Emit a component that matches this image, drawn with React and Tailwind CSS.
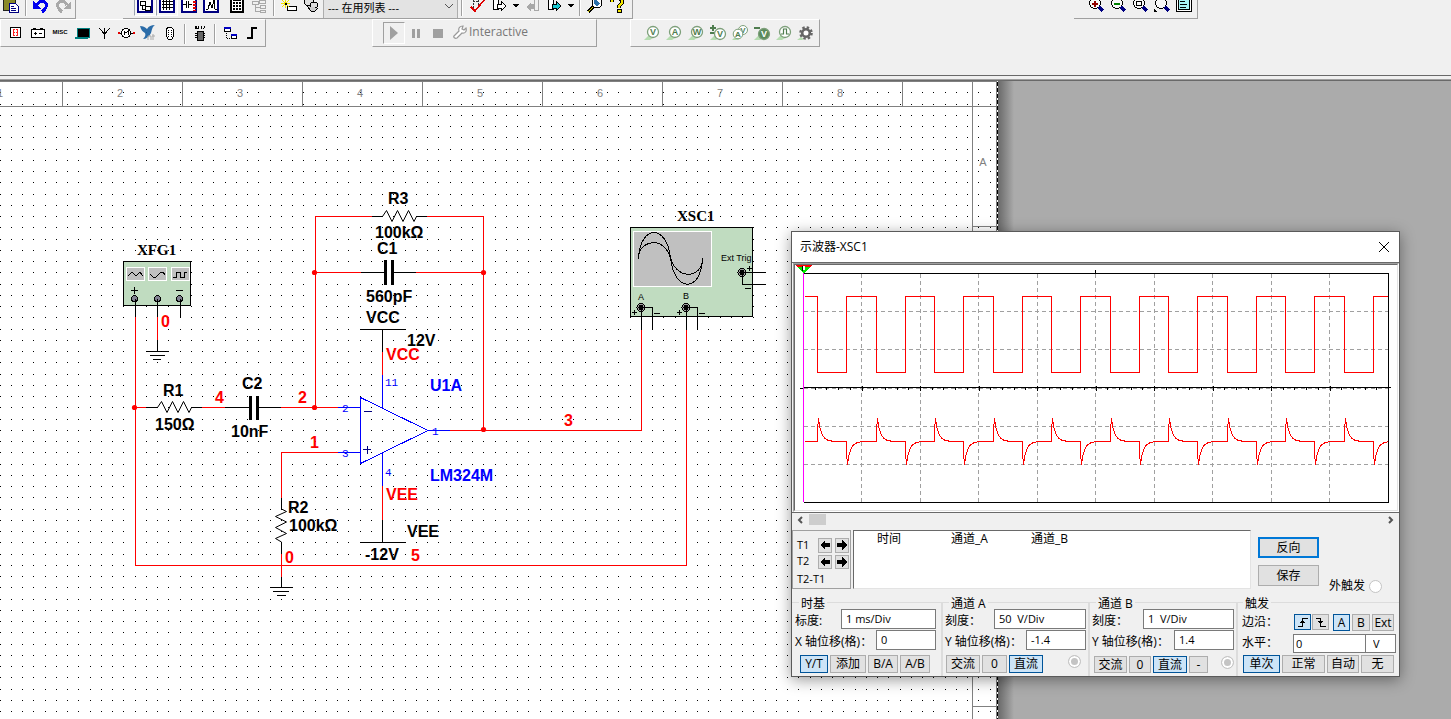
import React, { useState } from 'react';

const BOLD = { fontFamily: '"Liberation Sans", Arial, sans-serif', fontWeight: 700 };
const MONO = { fontFamily: '"Liberation Mono", monospace' };
const SERIF = { fontFamily: '"Liberation Serif", serif', fontWeight: 700 };
const SANS = { fontFamily: '"Liberation Sans", Arial, sans-serif' };

/* ---------- toolbar pieces ---------- */

const Icon = ({ children, smooth }) => (
  <svg viewBox="0 0 20 16" className="w-5 h-4 shrink-0" fill="none" shapeRendering={smooth ? 'auto' : 'crispEdges'}>
    {children}
  </svg>
);

const Tool = ({ label, pressed, smooth, children }) => (
  <button
    aria-label={label}
    className={`w-[22px] shrink-0 flex justify-center items-end ${pressed ? 'h-[22px] pb-[2px] -mb-[3px] border border-t-gray-400 border-l-gray-400 border-r-white border-b-white bg-[#f6f6f6]' : 'h-4'}`}
  >
    <Icon smooth={smooth}>{children}</Icon>
  </button>
);

const Sep = () => (
  <div className="w-2 h-5 shrink-0 flex justify-center -mb-[3px]">
    <div className="w-[2px] h-full bg-[#a0a0a0] border-r border-white"></div>
  </div>
);

const Drop = ({ label }) => (
  <button aria-label={label} className="w-[11px] h-4 shrink-0 flex items-end justify-center">
    <svg viewBox="0 0 10 16" className="w-[10px] h-4" shapeRendering="crispEdges">
      <path d="M2 7h6v1h-1v1h-1v1h-2v-1h-1v-1h-1z" fill="#000" />
    </svg>
  </button>
);

const TopBar = ({ className, children }) => (
  <div className={`h-[19px] shrink-0 overflow-hidden flex items-end pb-[5px] border-r border-b border-[#a0a0a0] ${className}`}>
    {children}
  </div>
);

const LowerBar = ({ className, children }) => (
  <div className={`h-7 shrink-0 flex items-end pb-[5px] border border-t-white border-l-white border-r-[#a0a0a0] border-b-[#a0a0a0] ${className}`}>
    {children}
  </div>
);

const Magnifier = ({ children }) => (
  <>
    <circle cx="9" cy="6" r="5.500" fill="#f8f8f8" stroke="#000" />
    <path d="M13 10l4 4" stroke="#000080" strokeWidth="3" />
    {children}
  </>
);

const Probe = ({ label, letter, cx = 11, cy = 7, filled, before, children }) => (
  <Tool label={label} smooth>
    <path d="M2 15l5-5 4 3-3 2z" fill="#b5dcb0" />
    {before}
    <circle cx={cx} cy={cy} r="5.5" fill={filled ? '#5b8a5b' : '#fff'} stroke="#7d9f7a" strokeWidth="1.3" />
    {letter && (
      <text x={cx} y={cy + 3} textAnchor="middle" fontSize="9" fill={filled ? '#fff' : '#4f7d4f'} style={BOLD}>{letter}</text>
    )}
    {children}
  </Tool>
);

const Header = () => (
  <header className="h-[81px] shrink-0 bg-[#f0f0f0] overflow-hidden flex flex-col">
    <div className="flex">
      <TopBar className="w-[76px]">
        <Tool label="粘贴">
          <path d="M2 1h12v12h-12z" fill="#8a8a2a" stroke="#222" />
          <path d="M8 6h6l3 3v6h-9z" fill="#fff" stroke="#000080" />
          <path d="M10 9h3M10 11h5M10 13h5" stroke="#000080" />
        </Tool>
        <Sep />
        <Tool label="撤销">
          <path d="M2 4v8h8z" fill="#0000ee" />
          <path d="M6 8Q10 2 14 5Q18 9 11 15" stroke="#0000ee" strokeWidth="3" />
        </Tool>
        <Tool label="重做">
          <path d="M18 4v8h-8z" fill="#a8a8a8" />
          <path d="M14 8Q10 2 6 5Q2 9 9 15" stroke="#a8a8a8" strokeWidth="3" />
        </Tool>
      </TopBar>

      <TopBar className="ml-[47px] w-[510px] pl-[11px]">
        <Tool label="设计工具箱" pressed>
          <path d="M3 0h14v15h-14z" fill="#fff" stroke="#000080" strokeWidth="1.6" />
          <path d="M5 4h5v4h-5zM10 9h5v4h-5z" stroke="#000" />
          <path d="M7 8v4h3" stroke="#000" />
        </Tool>
        <Tool label="电子表格" pressed>
          <path d="M3 0h14v15h-14z" fill="#fff" stroke="#000080" strokeWidth="1.6" />
          <path d="M6.500 2v11M9.500 2v11M12.500 2v11M5 4.500h11M5 7.500h11M5 10.500h11" stroke="#000" />
        </Tool>
        <Tool label="SPICE 网表">
          <path d="M3 0h14v15h-14z" fill="#fff" stroke="#000080" strokeWidth="1.6" />
          <path d="M4 7.500h3M10 7.500h3M7.500 4v7M9.500 4v7" stroke="#000" />
          <path d="M15 1v13" stroke="#e00000" strokeDasharray="2 1" strokeWidth="3" />
        </Tool>
        <Tool label="图示仪">
          <path d="M3 0h14v15h-14z" fill="#fff" stroke="#000080" strokeWidth="1.6" />
          <path d="M5 12h2l2-7 2 6 2-8 1 9h2" stroke="#000" />
        </Tool>
        <div className="w-1"></div>
        <Tool label="后处理器">
          <path d="M4 0h12v15h-12z" fill="#fff" stroke="#000" strokeWidth="1.5" />
          <path d="M6 6h8M6 9h8M6 12h8" stroke="#000" strokeWidth="2" strokeDasharray="2 1" />
          <path d="M6 3h8" stroke="#000" />
        </Tool>
        <Tool label="母电路图">
          <path d="M3 4h6v3h-6zM10 3h6v3h-6zM11 8h5v3h-5zM11 13h5v2h-5zM6 7v7h5M6 10h5" stroke="#a8a8a8" />
        </Tool>
        <Sep />
        <Tool label="元器件向导">
          <path d="M8.500 9.500h9v4h-9z" fill="#fff" stroke="#000" />
          <path d="M3 3l7 7M10 3l-7 7M2 6.500h9M6.500 2v9" stroke="#f4e600" strokeWidth="1.4" />
          <path d="M6 6h2v2h-2z" fill="#000" />
        </Tool>
        <Tool label="数据库管理器">
          <ellipse cx="8" cy="5" rx="5" ry="3.500" fill="#ddd" stroke="#000" />
          <ellipse cx="13" cy="8" rx="4" ry="3" fill="#ddd" stroke="#000" />
          <path d="M6 9l4 5h4l3-3" fill="#ccc" stroke="#000" />
        </Tool>
        <div className="relative h-[22px] w-[135px] ml-px shrink-0 -mb-[3px]">
          <select
            aria-label="在用列表"
            className="appearance-none w-full h-full pl-1 text-[11px] leading-[20px] text-black bg-[#e3e3e3] border border-[#adadad]"
          >
            <option>--- 在用列表 ---</option>
          </select>
          <svg viewBox="0 0 10 6" className="absolute right-1 top-[9px] w-[10px] h-[6px] pointer-events-none" fill="none">
            <path d="M1 1l4 4 4-4" stroke="#555" />
          </svg>
        </div>
        <Sep />
        <Tool label="电气规则检查">
          <path d="M6 3v9M11 3v8M6 4h5" stroke="#333" strokeDasharray="2 1" />
          <path d="M4 10l4 4 9-11" stroke="#e00000" strokeWidth="1.6" />
        </Tool>
        <Tool label="转移到 PCB">
          <path d="M4 2h5v10h-5z" fill="#fff" stroke="#000" />
          <path d="M8 7h4v-3l5 5-5 5v-3h-4z" fill="#fff" stroke="#000" />
        </Tool>
        <Drop label="转移选项" />
        <Tool label="从文件反向注解">
          <path d="M12 2h4v11h-4z" stroke="#a8a8a8" />
          <path d="M12 7v5h-3v2l-5-4 5-5v2z" fill="#a8a8a8" />
        </Tool>
        <Tool label="正向注解">
          <path d="M4 2h5v10h-5z" fill="#fff" stroke="#000" />
          <path d="M8 7h4v-3l5 5-5 5v-3h-4z" fill="#18c8d0" stroke="#000" />
        </Tool>
        <Drop label="注解选项" />
        <Sep />
        <Tool label="查找范例">
          <circle cx="12" cy="6" r="5" fill="#fff" stroke="#000" />
          <path d="M9 3h3l3 4-3 2-3-2z" fill="#2a6fa8" />
          <path d="M8 10l-5 5" stroke="#000" strokeWidth="3" />
          <path d="M8 10l-5 5" stroke="#e8e000" />
        </Tool>
        <Tool label="帮助">
          <path d="M5 5v-2l2-2h5l3 2v3l-3 3v2" stroke="#000" strokeWidth="4" />
          <path d="M5 5v-2l2-2h5l3 2v3l-3 3v2" stroke="#f4e600" strokeWidth="2" />
          <path d="M10 12h4v3h-4z" fill="#f4e600" stroke="#000" />
        </Tool>
      </TopBar>

      <TopBar className="ml-[441px] w-[124px] pl-[11px]">
        <Tool label="放大"><Magnifier><path d="M6 7h6M9 4v6" stroke="#900000" strokeWidth="2" /></Magnifier></Tool>
        <Tool label="缩小"><Magnifier><path d="M6 7h6" stroke="#008000" strokeWidth="2" /></Magnifier></Tool>
        <Tool label="缩放区域"><Magnifier><path d="M6.500 4.500h5v4h-5z" stroke="#000" /></Magnifier></Tool>
        <Tool label="缩放页面"><Magnifier><path d="M2 12v3h3z" fill="#000" /></Magnifier></Tool>
        <Tool label="全屏">
          <path d="M2.500 -0.500h15v15h-15z" fill="#fff" stroke="#000" />
          <path d="M4.500 0.500h11v12h-11z" fill="#a8f4f4" stroke="#000" />
          <path d="M6 4.500h5M6 7.500h7M6 10.500h6" stroke="#000" />
        </Tool>
      </TopBar>
    </div>

    <div className="flex">
      <LowerBar className="w-[266px] pl-1">
        <Tool label="指示器">
          <path d="M4.500 2.500h10v10h-10z" fill="#fff" stroke="#000" />
          <path d="M7 4.500h5M7 7.500h5M7 10.500h5M7.500 5v6M11.500 5v6" stroke="#ff2020" strokeDasharray="2 1" />
        </Tool>
        <Tool label="电源">
          <path d="M3.500 4.500h13v8h-13z" fill="#fff" stroke="#000" />
          <path d="M5 3.500h3M12 3.500h3M6 8.500h3M7.500 7v3M11 8.500h3" stroke="#000" />
        </Tool>
        <Tool label="其他" smooth>
          <text x="10" y="9" textAnchor="middle" fontSize="6" fill="#000" style={BOLD}>MISC</text>
        </Tool>
        <Tool label="高级外设">
          <path d="M5 3h12v9h-12z" fill="#000" stroke="#008080" />
          <path d="M3 13h13" stroke="#008080" strokeWidth="2" />
        </Tool>
        <Tool label="射频">
          <path d="M10.500 3v11M5 3l5.500 6 5.500-6" stroke="#000" />
        </Tool>
        <Tool label="机电">
          <path d="M3 8h3M14 8h3" stroke="#000" />
          <path d="M2 8h2M17 8h2" stroke="#e00000" strokeWidth="2" />
          <circle cx="10" cy="8" r="4.5" fill="#fff" stroke="#000" />
          <path d="M8 10v-4l2 2 2-2v4" stroke="#000" />
        </Tool>
        <Tool label="NI 元器件" smooth>
          <path d="M2 1c3 0 5 1 7 3 2-3 4-4 8-4-3 2-3 5-4 8-2 4-5 6-8 6 2-2 3-4 2-6-2-1-4-3-5-7z" fill="#2b6ca8" />
          <path d="M10 15v-4h3v4M15 9v6M14 11h3" stroke="#aaa" />
        </Tool>
        <Tool label="连接器">
          <path d="M7.500 2.500h4l2 2v7l-2 3h-3l-2-3v-7z" fill="#fff" stroke="#000" />
          <path d="M8.500 5v7M11.500 5v7" stroke="#000" strokeDasharray="1 1" />
        </Tool>
        <Sep />
        <Tool label="微控制器">
          <path d="M5 1h2v2h1v-2h1v3h2v-3h1v3h2v-3h1v2h-2v1h-8z" fill="#000" />
          <path d="M7 6h6v9h-6z" fill="#666" stroke="#000" />
          <path d="M5 8.500h2M5 10.500h2M5 12.500h2M13 8.500h2M13 10.500h2M13 12.500h2" stroke="#000" />
        </Tool>
        <Sep />
        <Tool label="层次块">
          <path d="M4.500 3.500h6v3h-6zM11.500 10.500h5v3h-5z" fill="#fff" stroke="#000" />
          <path d="M4 3h7M11 10h6" stroke="#0000c0" strokeWidth="2" />
          <path d="M6.500 8v5.500h4" stroke="#000" strokeDasharray="1 1" />
        </Tool>
        <Tool label="总线">
          <path d="M5 13h5v-10h5" stroke="#000" strokeWidth="2" />
        </Tool>
      </LowerBar>

      <LowerBar className="ml-[106px] w-[225px] pl-[10px]">
        <button aria-label="运行" className="w-[22px] h-[22px] -mb-[3px] flex items-center justify-center border border-t-[#a0a0a0] border-l-[#a0a0a0] border-r-white border-b-white">
          <svg viewBox="0 0 8 14" className="w-2 h-[14px]"><path d="M0 0l8 7-8 7z" fill="#a0a0a0" /></svg>
        </button>
        <button aria-label="暂停" className="w-[22px] h-4 flex items-center justify-center gap-[2px]">
          <span className="w-[3px] h-[9px] bg-[#a0a0a0]"></span>
          <span className="w-[3px] h-[9px] bg-[#a0a0a0]"></span>
        </button>
        <button aria-label="停止" className="w-[22px] h-4 flex items-center justify-center">
          <span className="w-[10px] h-[9px] bg-[#a0a0a0]"></span>
        </button>
        <button className="ml-1 h-[18px] pb-px flex items-center gap-[2px] text-[#777] text-xs font-['Open_Sans']">
          <svg viewBox="0 0 14 14" className="w-[14px] h-[14px]" fill="none">
            <path d="M1 11l5-5c-1-3 1-5 4-5l-1 3 2 1 2-2c1 3-1 6-4 5l-5 5c-2 1-4-1-3-2z" fill="#fff" stroke="#999" strokeWidth="1.2" />
          </svg>
          Interactive
        </button>
      </LowerBar>

      <LowerBar className="ml-[33px] w-[190px] pl-[10px]">
        <Probe label="电压" letter="V" />
        <Probe label="电流" letter="A" />
        <Probe label="功率" letter="W" />
        <Probe label="差分电压" letter="V" cx={12} cy={9} before={<path d="M2 3h6M5 0v6M2 8h5" stroke="#4f7d4f" strokeWidth="2" />} />
        <Tool label="电压和电流" smooth>
          <path d="M2 15l5-5 4 3-3 2z" fill="#b5dcb0" />
          <circle cx="13" cy="5" r="4.5" fill="#fff" stroke="#7d9f7a" />
          <text x="13" y="8" textAnchor="middle" fontSize="8" fill="#4f7d4f" style={BOLD}>V</text>
          <circle cx="8" cy="9" r="4.8" fill="#fff" stroke="#7d9f7a" />
          <text x="8" y="12" textAnchor="middle" fontSize="8" fill="#4f7d4f" style={BOLD}>A</text>
        </Tool>
        <Probe label="电压参考" letter="V" cx={12} cy={9} filled before={<path d="M2 3h6" stroke="#4f7d4f" strokeWidth="2" />} />
        <Probe label="数字">
          <path d="M7 9h2.500v-5h3v5h2.500" stroke="#4f7d4f" strokeWidth="1.2" />
        </Probe>
        <Tool label="探针设置" smooth>
          <path d="M1 15l4-3 3 2-2 1z" fill="#b5dcb0" />
          <circle cx="10" cy="8" r="5.6" stroke="#666" strokeWidth="2.4" strokeDasharray="2.4 2" />
          <circle cx="10" cy="8" r="3.8" fill="#fff" stroke="#666" strokeWidth="2.6" />
        </Tool>
      </LowerBar>
    </div>

    <div className="mt-auto h-[6px] border-t border-[#696969] flex flex-col justify-end">
      <div className="h-[2px] bg-[#696969] border-t border-[#a0a0a0]"></div>
    </div>
  </header>
);

/* ---------- schematic ---------- */

const RED = '#ff0000';
const BLUE = '#0000ff';

const wires = [
  [RED, 'M135.5 317V565.5H686.5V330M157.5 317V340M135 407.5H146M202 407.5H225M281 407.5H338'],
  [RED, 'M315.5 407V216.5H372M427 216.5H483.5V430M315 272.5H361M416 272.5H483M382.5 352V375M382.5 486V520'],
  [RED, 'M338 452.5H281.5V498M281.5 554V577M450 430.5H641.5V330'],
  ['#000', 'M146 407.5H158M191 407.5H202M225 407.5H250M258 407.5H281M372 216.5H383M416 216.5H427M361 272.5H385M393 272.5H416'],
  ['#000', 'M360 329.5H406M382.5 330V352M382.5 520V542M360 542.5H406M281.5 498V509M281.5 542V554M281.5 577V587'],
  ['#000', 'M270 587.5H293M273 591.5H289M277 595.5H286M157.5 340V351M146 351.5H169M150 355.5H165M153 359.5H161'],
  [BLUE, 'M338 407.5H360M338 452.5H360M428 430.5H450M382.5 375V408M382.5 453V486'],
  ['#000080', 'M364 411.5H372M363 449.5H371M367.5 446V454'],
];

const labels = [
  ['R3', 388, 204, '#000'], ['100kΩ', 375, 238, '#000'], ['C1', 377, 254, '#000'], ['560pF', 366, 302, '#000'],
  ['VCC', 366, 323, '#000'], ['12V', 407, 346, '#000'], ['VCC', 386, 360, RED], ['U1A', 430, 391, BLUE],
  ['LM324M', 430, 481, BLUE], ['R1', 163, 396, '#000'], ['150Ω', 155, 430, '#000'], ['C2', 242, 389, '#000'],
  ['10nF', 231, 437, '#000'], ['R2', 288, 513, '#000'], ['100kΩ', 289, 531, '#000'], ['VEE', 386, 500, RED],
  ['VEE', 407, 537, '#000'], ['-12V', 365, 560, '#000'], ['4', 215, 403, RED], ['2', 298, 403, RED],
  ['1', 310, 448, RED], ['0', 285, 563, RED], ['5', 411, 561, RED], ['3', 564, 426, RED], ['0', 161, 327, RED],
];

const pins = [['11', 385, 386], ['2', 342, 412], ['3', 342, 457], ['1', 432, 435], ['4', 385, 476]];

const Schematic = () => (
  <svg width="998" height="1000" viewBox="0 81 998 1000" className="block shrink-0 bg-white" fill="none">
    <defs>
      <pattern id="dots" width="45" height="45" patternUnits="userSpaceOnUse">
        {[0, 11, 22, 33].map(x => [2, 14, 25, 36].map(y => (
          <rect key={`${x}-${y}`} x={x} y={y} width="1" height="1" fill="#000" />
        )))}
      </pattern>
    </defs>
    <rect x="0" y="81" width="996" height="1000" fill="url(#dots)" />

    {/* sheet frame */}
    <g stroke="#808080" shapeRendering="crispEdges">
      <path d="M0 81.5H997M0 106.5H996M972.5 82V1081M996.5 82V1081" />
      {[62, 182, 302, 422, 542, 662, 782, 902].map(x => <path key={x} d={`M${x}.5 82V106`} />)}
      {[226, 346, 466, 586, 706, 826].map(y => <path key={y} d={`M972 ${y}.5H996`} />)}
      <path d="M997.5 82V1081" stroke="#000" strokeDasharray="4 2" />
    </g>
    <g fill="#808080" fontSize="11" textAnchor="middle" style={SANS}>
      {[1, 2, 3, 4, 5, 6, 7, 8].map(n => <text key={n} x={(n - 1) * 120} y="97">{n}</text>)}
      <text x="983" y="166">A</text>
    </g>

    {/* function generator */}
    <g shapeRendering="crispEdges">
      <rect x="123.5" y="261.5" width="67" height="44" fill="#c0dcc0" stroke="#000" />
      {[126, 148, 171].map(x => <rect key={x} x={x + 0.5} y="267.5" width="18" height="13" fill="#c0c0c0" stroke="#fff" />)}
      <path d="M128 276l4-4 4 4 4-4 3 4M150 274l3 3h3l5-5h2l2 3M173 277h3v-5h4v5h4v-5h3" stroke="#000" />
      <path d="M131 290.5h7M134.5 287v7M176 290.5h7" stroke="#000" />
      {[134, 157, 179].map(x => <circle key={x} cx={x + 0.5} cy="298.5" r="3" fill="#808090" stroke="#000" />)}
      <path d="M135.5 299V317M157.5 299V317M180.5 299V317" stroke="#000" />
    </g>

    {/* oscilloscope symbol */}
    <g shapeRendering="crispEdges">
      <rect x="630.5" y="227.5" width="122" height="89" fill="#c0dcc0" stroke="#000" />
      <rect x="633.5" y="231.5" width="78" height="55" fill="#c0c0c0" stroke="#fff" />
      <path d="M638.5 259C640 224 667 224 670.5 258S701 294 702.5 258" stroke="#000" />
      <path d="M638.5 255C643 238 665 238 670.5 258S698 280 702.5 262" stroke="#000" />
      {[[641, 307], [686, 307], [742, 272]].map(([x, y]) => (
        <g key={x}>
          <circle cx={x} cy={y + 0.5} r="4" fill="#a0a0a0" stroke="#000" />
          <circle cx={x} cy={y + 0.5} r="2.5" fill="#000" />
        </g>
      ))}
      <path d="M641.5 308V330M641 307.5H652.5V329M686.5 308V330M686 307.5H697.5V329M742 272.5H766M742.5 272V284.5H766" stroke="#000" />
      <path d="M632 312.5h5M634.5 310v5M654 313.5h6M677 312.5h5M679.5 310v5M699 313.5h6M747 268.5h5M749.5 266v5M745 288.5h6" stroke="#000" />
    </g>
    <g fill="#000" fontSize="9" style={SANS}>
      <text x="721" y="261">Ext Trig</text>
      <text x="638" y="300">A</text>
      <text x="683" y="299">B</text>
    </g>
    <g fill="#000" fontSize="15" style={SERIF}>
      <text x="137" y="255">XFG1</text>
      <text x="677" y="221">XSC1</text>
    </g>

    {/* wires and parts */}
    <g shapeRendering="crispEdges">
      {wires.map(([color, d]) => <path key={d} d={d} stroke={color} />)}
      <path d="M360.5 397.5L428 430.5L360.5 463.5Z" stroke={BLUE} />
      <path d="M249 396h3v24h-3zM256 396h3v24h-3zM384 260h3v25h-3zM391 260h3v25h-3z" fill="#000" />
    </g>
    <path d="M382.5 216.5l4-6 5.5 11 5.5-11 5.5 11 5.5-11 5.5 11 2.5-5M157.5 407.5l4-6 5.5 11 5.5-11 5.5 11 5.5-11 5.5 11 2.5-5" stroke="#000" />
    <path d="M281.5 509l5 2.5-11 5 11 5.5-11 5.5 11 6-11 5 6 3.5" stroke="#000" />
    {[[134, 407], [314, 407], [314, 272], [483, 272], [483, 429]].map(([x, y]) => (
      <circle key={`${x}-${y}`} cx={x + 0.5} cy={y + 0.5} r="2.6" fill={RED} />
    ))}

    <g fontSize="16" style={BOLD}>
      {labels.map(([t, x, y, color]) => <text key={`${t}${x}${y}`} x={x} y={y} fill={color}>{t}</text>)}
    </g>
    <g fontSize="11" fill={BLUE} style={MONO}>
      {pins.map(([t, x, y]) => <text key={`${t}${y}`} x={x} y={y}>{t}</text>)}
    </g>
  </svg>
);

/* ---------- oscilloscope window ---------- */

const HALF = 29.25;

const squareWave = () => {
  let d = 'M805 296.5';
  for (let i = 0; i < 20; i++) {
    const x = Math.floor(817.5 + i * HALF) + 0.5;
    if (x > 1388) break;
    d += `H${x}V${i % 2 === 0 ? 372.5 : 296.5}`;
  }
  return d + 'H1388';
};

const spikeWave = () => {
  let d = 'M805 441.5';
  for (let i = 0; i < 20; i++) {
    const x = Math.floor(817.5 + i * HALF) + 0.5;
    if (x > 1388) break;
    const dir = i % 2 === 0 ? -1 : 1;
    d += `H${x}V${441.5 + dir * 12}L${x + 1} ${441.5 + dir * 23}`;
    for (let t = 1; t <= 14 && x + 1 + t < 1388; t++) {
      d += `L${x + 1 + t} ${(441.5 + dir * 21 * Math.exp(-t / 3.4)).toFixed(1)}`;
    }
    d += `L${Math.min(x + 16, 1388)} 441.5`;
  }
  return d + 'H1388';
};

const Plot = () => (
  <svg viewBox="795 265 602 245" className="block w-full h-[245px] bg-white" fill="none" shapeRendering="crispEdges">
    <g stroke="#a0a0a0" strokeDasharray="4 3">
      {[861, 920, 978, 1037, 1095, 1154, 1212, 1271, 1329].map(x => <path key={x} d={`M${x}.5 274V502`} />)}
      {[311, 349, 388, 426, 464].map(y => <path key={y} d={`M804 ${y}.5H1388`} />)}
    </g>
    <path d="M804 273.5H1388.5V502.5H804M800 388.5H804M804 387.5H1391M1095.5 270V274" stroke="#000" />
    {Array.from({ length: 50 }, (_, i) => (
      <path key={i} d={`M${Math.floor(803.5 + i * 11.7) + 0.5} ${i % 5 ? 388 : 386}V${i % 5 ? 390 : 391}`} stroke="#000" />
    ))}
    <path d="M803.5 273V502" stroke="#ff00ff" />
    <path d={squareWave()} stroke={RED} />
    <path d={spikeWave()} stroke={RED} />
    <path d="M795 265h17l-8 8h-1z" fill="#00e800" />
    <path d="M795 265h17l-2 2h-13z" fill={RED} />
    <path d="M803 266h2v4h-2z" fill="#fff" />
    <path d="M802.5 266v5" stroke="#000" />
  </svg>
);

const Btn = ({ active, className = '', children, ...rest }) => (
  <button
    className={`shrink-0 flex items-center justify-center border whitespace-nowrap ${active ? 'bg-[#cce4f7] border-[#005499]' : 'bg-[#e1e1e1] border-[#adadad]'} ${className}`}
    {...rest}
  >
    {children}
  </button>
);

const Field = ({ id, label, value, width }) => (
  <div className="flex items-center justify-between h-5">
    <label htmlFor={id} className="whitespace-nowrap pt-[3px]">{label}</label>
    <input id={id} defaultValue={value} className={`h-5 px-1 pb-[2px] bg-white border border-[#7a7a7a] text-[11px] ${width}`} />
  </div>
);

const Group = ({ title, className, children }) => (
  <fieldset className={`border-t border-r-2 border-[#dcdcdc] shrink-0 min-w-0 h-20 ${className}`}>
    <legend className="ml-1 px-[2px] h-[13px] leading-[15px]">{title}</legend>
    {children}
  </fieldset>
);

const Arrow = ({ flip }) => (
  <svg viewBox="0 0 10 10" className={`w-[10px] h-[10px] ${flip ? 'rotate-180' : ''}`} shapeRendering="crispEdges">
    <path d="M0 5l5-5v3h5v4h-5v3z" fill="#000" />
  </svg>
);

const Radio = ({ label, checked }) => (
  <input
    type="radio"
    aria-label={label}
    defaultChecked={checked}
    className="appearance-none block shrink-0 w-[13px] h-[13px] rounded-full border border-[#c4c4c4] bg-white checked:bg-[#c4c4c4] checked:shadow-[inset_0_0_0_2px_#fff]"
  />
);

const Oscilloscope = () => {
  const [mode, setMode] = useState('Y/T');
  const [couplingA, setCouplingA] = useState('直流');
  const [couplingB, setCouplingB] = useState('直流');
  const [edge, setEdge] = useState('up');
  const [source, setSource] = useState('A');
  const [trigger, setTrigger] = useState('单次');

  return (
    <section className="absolute left-[791px] top-[150px] w-[609px] border border-[#5a5a5a] bg-[#f0f0f0] shadow-[0_3px_14px_rgba(0,0,0,0.4)] text-xs text-black font-['Open_Sans','Noto_Sans_CJK_SC',sans-serif]">
      <div className="h-[31px] pl-2 pr-2 flex items-center justify-between bg-white border-b border-[#696969]">
        <h1 className="text-xs">示波器-XSC1</h1>
        <button aria-label="关闭" className="w-[14px] h-[14px] flex items-center justify-center">
          <svg viewBox="0 0 12 12" className="w-3 h-3"><path d="M1 1l10 10M11 1l-10 10" stroke="#000" /></svg>
        </button>
      </div>

      <div className="ml-px border border-t-[#a0a0a0] border-l-[#a0a0a0] border-r-white border-b-white">
        <div className="border border-t-[#696969] border-l-[#696969] border-r-[#e3e3e3] border-b-[#e3e3e3]">
          <Plot />
        </div>
      </div>

      <div className="h-[18px] border-t border-[#696969] flex items-start px-1 pt-px">
        <svg viewBox="0 0 8 12" className="w-2 h-3" fill="none"><path d="M6 3l-3 3 3 3" stroke="#555" strokeWidth="2" /></svg>
        <div className="ml-[5px] w-[17px] h-[11px] bg-[#cdcdcd]"></div>
        <svg viewBox="0 0 8 12" className="ml-auto w-2 h-3" fill="none"><path d="M2 3l3 3-3 3" stroke="#555" strokeWidth="2" /></svg>
      </div>

      <div className="flex h-[59px]">
        <div className="w-[59px] shrink-0 border border-[#a0a0a0] pl-1 pt-[6px] text-[11px] leading-[14px]">
          <div className="flex h-4 items-center">
            <span className="w-[21px]">T1</span>
            <Btn aria-label="T1 左移" className="w-[14px] h-[15px]"><Arrow /></Btn>
            <Btn aria-label="T1 右移" className="ml-[3px] w-[14px] h-[15px]"><Arrow flip /></Btn>
          </div>
          <div className="mt-px flex h-4 items-center">
            <span className="w-[21px] pb-[3px]">T2</span>
            <Btn aria-label="T2 左移" className="w-[14px] h-[14px]"><Arrow /></Btn>
            <Btn aria-label="T2 右移" className="ml-[3px] w-[14px] h-[14px]"><Arrow flip /></Btn>
          </div>
          <div className="mt-[2px]">T2-T1</div>
        </div>
        <div className="ml-[2px] w-[398px] shrink-0 bg-white border border-t-[#696969] border-l-[#696969] border-r-[#e3e3e3] border-b-[#e3e3e3]">
          <table className="leading-[16px]">
            <thead>
              <tr>
                <th className="w-[97px] pl-[23px] text-left font-normal">时间</th>
                <th className="w-20 text-left font-normal">通道_A</th>
                <th className="w-20 text-left font-normal">通道_B</th>
              </tr>
            </thead>
          </table>
        </div>
        <div className="ml-[7px] pt-[7px] shrink-0">
          <button className="flex items-center justify-center w-[61px] h-[21px] bg-[#e1e1e1] border-2 border-[#0078d7]">反向</button>
          <Btn className="mt-[7px] w-[61px] h-[21px]">保存</Btn>
        </div>
        <label className="self-end ml-[10px] mb-[-5px] flex items-center gap-1 whitespace-nowrap">
          外触发 <Radio label="外触发" />
        </label>
      </div>

      <div className="mt-[7px] flex">
        <Group title="时基" className="w-[151px] pl-[3px] pr-[5px]">
          <Field id="timebase" label="标度:" value="1 ms/Div" width="w-[95px]" />
          <div className="h-px"></div>
          <Field id="xpos" label="X 轴位移(格)：" value="0" width="w-[60px]" />
          <div className="mt-[5px] ml-[5px] flex gap-[2px]">
            {[['Y/T', 'w-7 h-[18px]'], ['添加', 'w-9 h-[18px]'], ['B/A', 'w-[30px] h-[18px]'], ['A/B', 'w-[30px] h-[18px]']].map(([m, w]) => (
              <Btn key={m} active={mode === m} onClick={() => setMode(m)} className={w}>{m}</Btn>
            ))}
          </div>
        </Group>

        <Group title="通道 A" className="w-[147px] pl-[2px] pr-[2px]">
          <Field id="scale-a" label="刻度：" value="50  V/Div" width="w-[92px]" />
          <div className="h-px"></div>
          <Field id="ypos-a" label="Y 轴位移(格)：" value="-1.4" width="w-[60px]" />
          <div className="mt-[5px] ml-px flex gap-[2px]">
            {[['交流', 'w-[34px] h-[18px]'], ['0', 'w-[25px] h-[18px]'], ['直流', 'w-[34px] h-[18px]']].map(([m, w]) => (
              <Btn key={m} active={couplingA === m} onClick={() => setCouplingA(m)} className={w}>{m}</Btn>
            ))}
            <span className="ml-auto mr-[5px]"><Radio label="通道 A 触发" checked /></span>
          </div>
        </Group>

        <Group title="通道 B" className="w-[148px] pl-[2px] pr-[2px]">
          <Field id="scale-b" label="刻度：" value="1  V/Div" width="w-[91px]" />
          <div className="h-px"></div>
          <Field id="ypos-b" label="Y 轴位移(格)：" value="1.4" width="w-[60px]" />
          <div className="mt-[6px] ml-[2px] flex gap-[2px]">
            {[['交流', 'w-[33px] h-[17px]'], ['0', 'w-[22px] h-[17px]'], ['直流', 'w-[34px] h-[17px]'], ['-', 'w-[19px] h-[17px]']].map(([m, w]) => (
              <Btn key={m} active={couplingB === m} onClick={() => setCouplingB(m)} className={w}>{m}</Btn>
            ))}
            <span className="ml-auto"><Radio label="通道 B 触发" checked /></span>
          </div>
        </Group>

        <fieldset className="grow min-w-0 h-20 border-t border-[#dcdcdc] pl-1">
          <legend className="ml-px px-[2px] h-[13px] leading-[15px]">触发</legend>
          <div className="flex pt-[5px] h-[23px] items-start">
            <span className="w-[52px] leading-[16px]">边沿：</span>
            <Btn aria-label="上升沿" active={edge === 'up'} onClick={() => setEdge('up')} className="w-[17px] h-4">
              <svg viewBox="0 0 11 10" className="w-[11px] h-[10px]" fill="none" shapeRendering="crispEdges">
                <path d="M1 9.500h4.500v-8h5M3 5.500h5M4 4.500h3" stroke="#000" />
              </svg>
            </Btn>
            <Btn aria-label="下降沿" active={edge === 'down'} onClick={() => setEdge('down')} className="ml-px w-[17px] h-4">
              <svg viewBox="0 0 11 10" className="w-[11px] h-[10px]" fill="none" shapeRendering="crispEdges">
                <path d="M1 1.500h4.500v8h5M3 4.500h5M4 5.500h3" stroke="#000" />
              </svg>
            </Btn>
            <div className="ml-1 flex gap-[2px]">
              {[['A', 'w-[17px] h-[17px]'], ['B', 'w-[18px] h-[17px]'], ['Ext', 'w-[22px] h-[17px]']].map(([m, w]) => (
                <Btn key={m} active={source === m} onClick={() => setSource(m)} className={w}>{m}</Btn>
              ))}
            </div>
          </div>
          <div className="mt-[2px] flex h-[18px]">
            <label htmlFor="level" className="w-[51px] leading-[18px]">水平：</label>
            <input id="level" defaultValue="0" className="w-[73px] h-[19px] px-[2px] bg-white border border-[#7a7a7a] text-[11px]" />
            <input aria-label="水平单位" defaultValue="V" className="-ml-px w-[31px] h-[19px] pl-[7px] bg-white border border-[#7a7a7a] text-[11px]" />
          </div>
          <div className="mt-[3px] ml-px flex gap-[2px]">
            {[['单次', 'w-[37px] h-[18px]'], ['正常', 'w-[43px] h-[18px]'], ['自动', 'w-8 h-[18px]'], ['无', 'w-[33px] h-[18px]']].map(([m, w]) => (
              <Btn key={m} active={trigger === m} onClick={() => setTrigger(m)} className={w}>{m}</Btn>
            ))}
          </div>
        </fieldset>
      </div>
    </section>
  );
};

const App = () => (
  <div className="h-screen flex flex-col overflow-hidden bg-[#ababab] font-['Open_Sans','Noto_Sans_CJK_SC',sans-serif]">
    <Header />
    <main className="relative grow min-h-0 flex overflow-hidden">
      <Schematic />
      <div className="w-4 shrink-0 bg-linear-to-r from-[#696969] to-[#ababab]"></div>
      <Oscilloscope />
    </main>
  </div>
);

export default App;
